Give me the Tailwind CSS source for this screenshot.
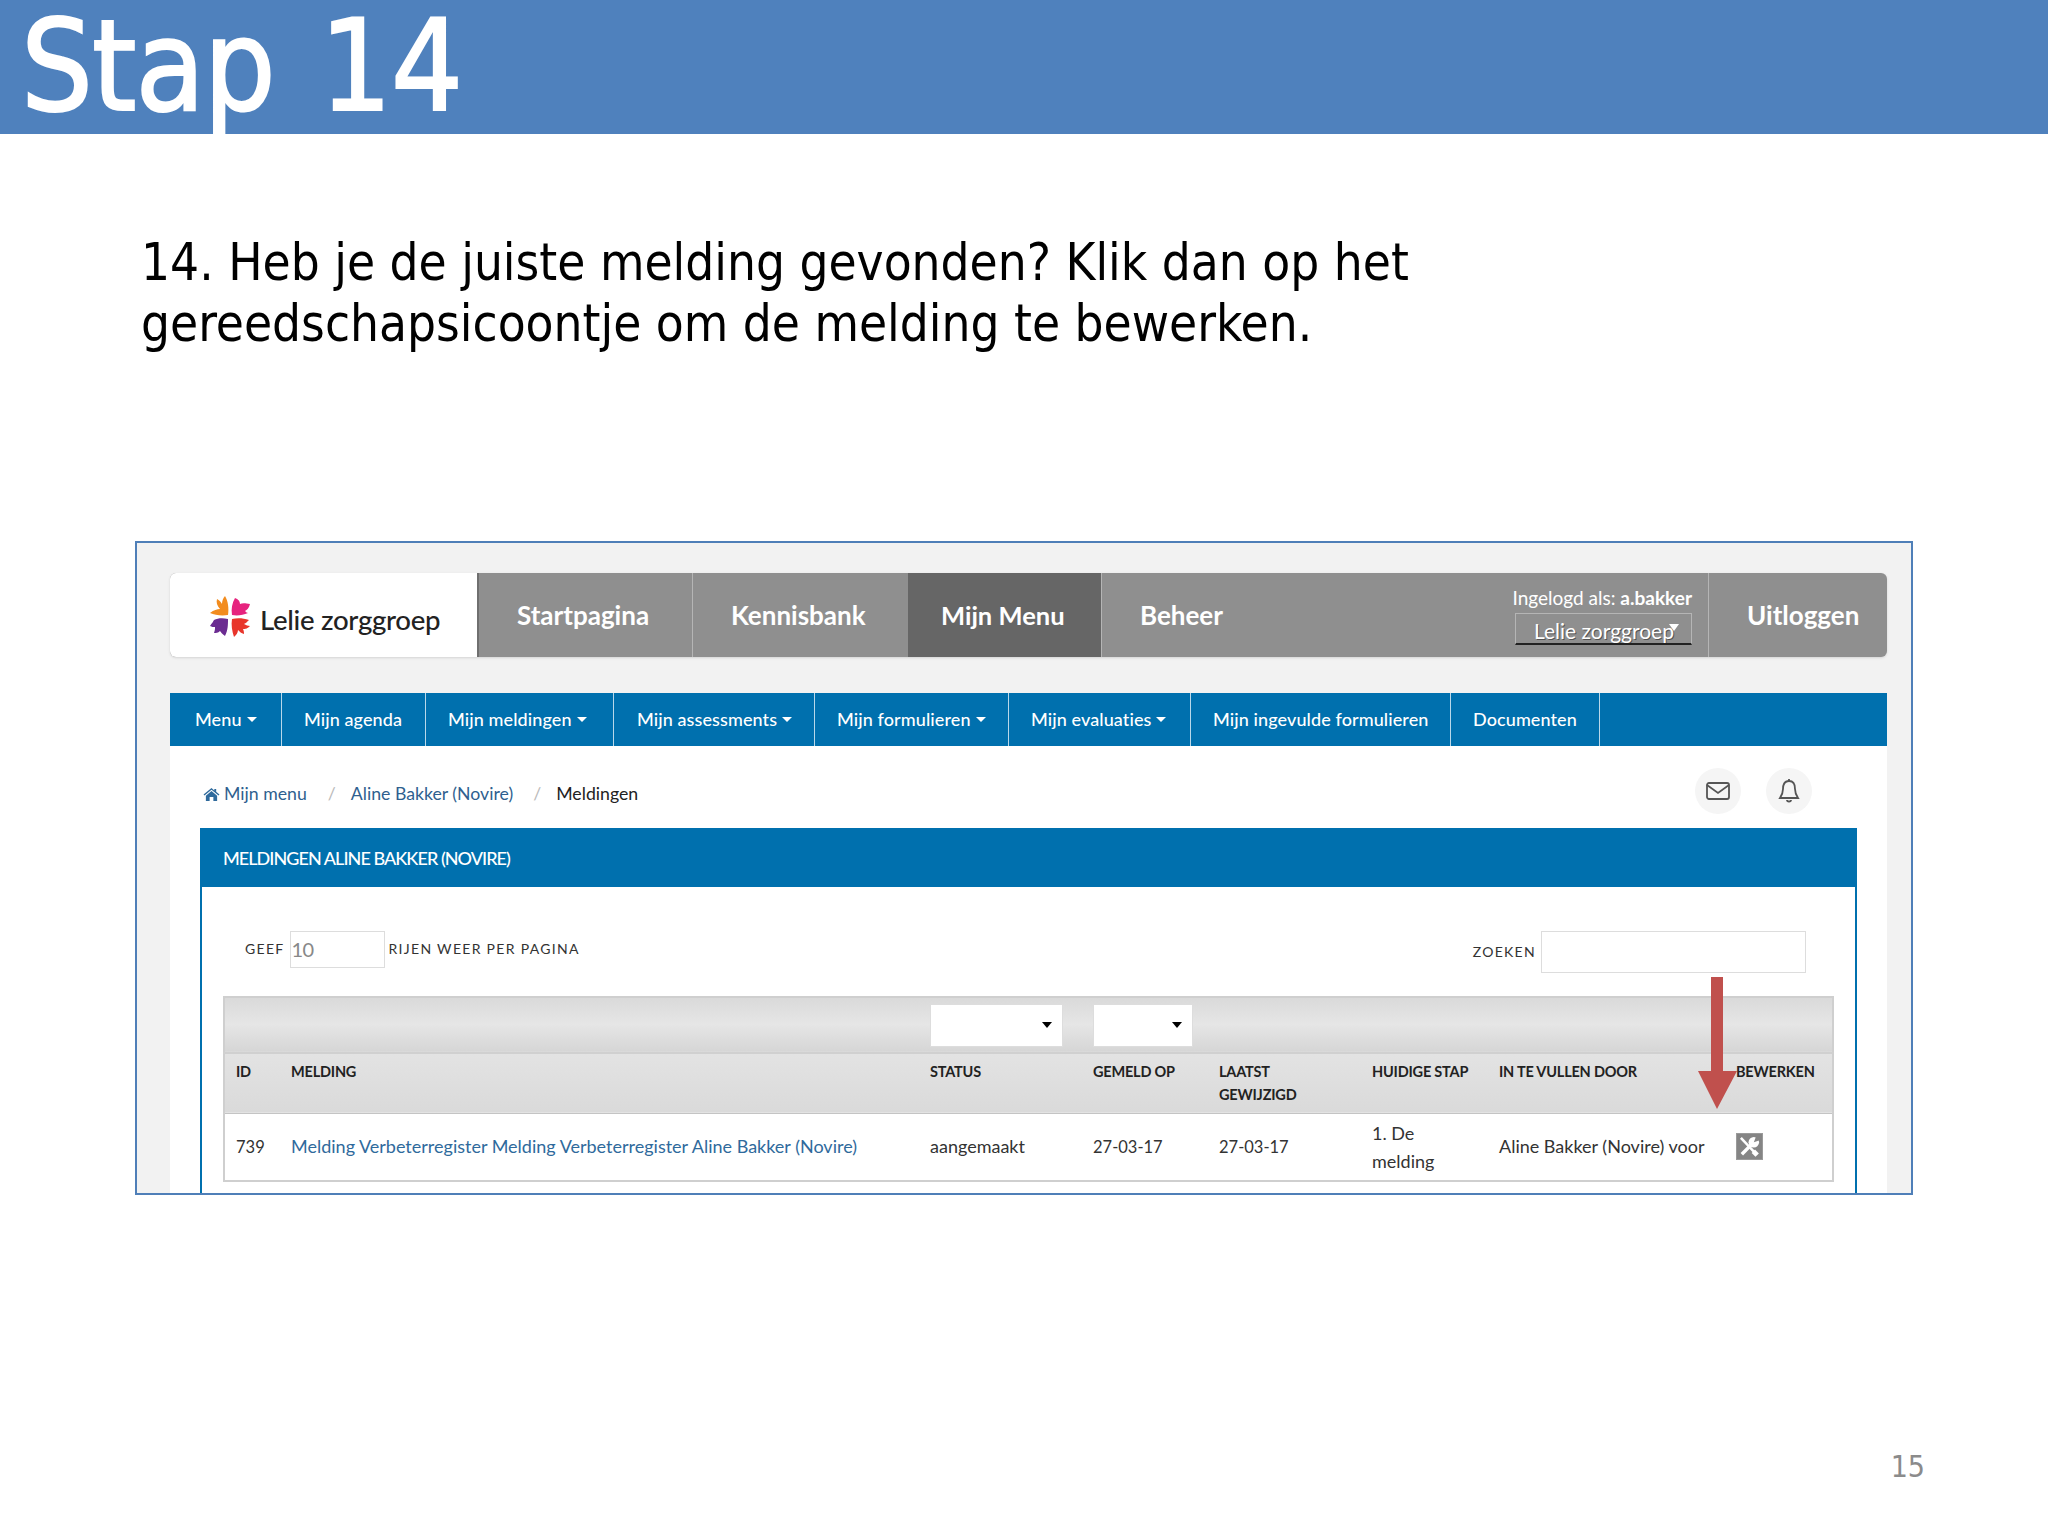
<!DOCTYPE html>
<html lang="nl">
<head>
    <meta charset="UTF-8">
    <title>Stap 14</title>
    <script src="https://cdn.jsdelivr.net/npm/@tailwindcss/browser@4"></script>
</head>
<body class="bg-white font-['DejaVu_Sans',sans-serif] font-stretch-condensed">
<div class="relative w-[2048px] h-[1536px] overflow-hidden">
    <!-- Slide title -->
    <header class="h-[134px] bg-[#4f81bd] overflow-hidden pl-[21px]">
        <h1 class="text-[126px] leading-[134px] text-white tracking-[-1px] [word-spacing:10px] [-webkit-text-stroke:2px_white]">Stap 14</h1>
    </header>

    <p class="ml-[141px] mt-[98px] text-[50.8px] leading-[61px] text-black">14. Heb je de juiste melding gevonden? Klik dan op het<br>gereedschapsicoontje om de melding te bewerken.</p>

    <!-- Screenshot of the app -->
    <section class="relative ml-[135px] mt-[187px] w-[1778px] h-[654px] border-2 border-[#4f7fb8] bg-[#f2f2f2] overflow-hidden pl-[33px] pr-[24px] pt-[30px] font-['Lato',sans-serif] font-stretch-normal">
        <!-- Top bar -->
        <div class="flex h-[84px] rounded-md shadow-sm bg-[#8f8f8f] text-white overflow-hidden">
            <div class="w-[307px] bg-white flex items-center gap-[9px] pl-[39px] text-[#222]">
                <svg class="mt-[4px]" width="42" height="42" viewBox="0 0 42 42">
                    <path fill="#f28c1e" d="M19 19 C12 20 6 19 1 17 C5 14 8 13 11 13 C8 10 7 6 8 3 C11 5 12 6 13 8 C13 5 14 2 16 0 C19 5 20 12 19 19Z"/>
                    <path fill="#e6237e" d="M23 19 C22 13 23 7 26 2 C29 3 31 5 31 8 C33 7 36 7 41 8 C40 12 38 14 36 15 C37 16 38 17 39 17 C34 19 29 20 23 19Z"/>
                    <path fill="#6b2c91" d="M19 23 C19 29 19 34 16 40 C13 38 12 36 11 35 C9 37 7 37 5 37 C6 34 6 33 6 31 C4 31 3 31 1 30 C3 27 4 26 5 24 C9 22 14 22 19 23Z"/>
                    <path fill="#e8352b" d="M23 23 C28 22 34 22 40 24 C38 26 37 27 35 28 C37 29 39 30 41 30 C38 33 36 33 34 33 C35 35 35 37 35 38 C32 37 31 36 29 34 C29 37 27 39 25 41 C23 35 22 29 23 23Z"/>
                </svg>
                <span class="text-[27.6px] leading-none mt-[9px] tracking-[-0.3px] font-medium">Lelie zorggroep</span>
            </div>
            <a class="w-[215px] border-l-2 border-[#6f6f6f] flex items-center pl-[38px] text-[26px] font-bold">Startpagina</a>
            <a class="w-[216px] border-l border-[#b5b5b5] flex items-center pl-[38px] text-[26px] font-bold">Kennisbank</a>
            <a class="w-[193px] bg-[#666666] flex items-center pl-[33px] text-[25.5px] font-bold">Mijn Menu</a>
            <a class="w-[344px] border-l border-[#b5b5b5] flex items-center pl-[38px] text-[26px] font-bold">Beheer</a>
            <div class="w-[263px] flex flex-col items-end pr-[16px] pt-[13px]">
                <div class="text-[19px] leading-[24px] whitespace-nowrap">Ingelogd als: <b>a.bakker</b></div>
                <div class="relative mt-[3px] w-[177px] h-[32px] border border-[#b5b5b5] border-b-2 border-b-[#222] text-[21px] leading-[33px] pl-[18px] whitespace-nowrap overflow-hidden [text-shadow:1px_1px_0_#555]">Lelie zorggroep<span class="absolute right-[12px] top-[10px] w-0 h-0 border-x-[5px] border-x-transparent border-t-[7px] border-t-white"></span></div>
            </div>
            <a class="flex-1 border-l border-[#b5b5b5] flex items-center pl-[38px] text-[26px] font-bold">Uitloggen</a>
        </div>

        <!-- Blue menu -->
        <nav class="flex h-[53px] mt-[36px] bg-[#0070ae] text-white text-[18px] tracking-[0.1px] font-medium">
            <a class="w-[112px] pl-[25px] border-r border-[#b9d8ea] flex items-center gap-[5px]">Menu <span class="w-0 h-0 border-x-[5px] border-x-transparent border-t-[5px] border-t-white"></span></a>
            <a class="w-[144px] pl-[22px] border-r border-[#b9d8ea] flex items-center">Mijn agenda</a>
            <a class="w-[188px] pl-[22px] border-r border-[#b9d8ea] flex items-center gap-[5px]">Mijn meldingen <span class="w-0 h-0 border-x-[5px] border-x-transparent border-t-[5px] border-t-white"></span></a>
            <a class="w-[201px] pl-[23px] border-r border-[#b9d8ea] flex items-center gap-[5px]">Mijn assessments <span class="w-0 h-0 border-x-[5px] border-x-transparent border-t-[5px] border-t-white"></span></a>
            <a class="w-[194px] pl-[22px] border-r border-[#b9d8ea] flex items-center gap-[5px]">Mijn formulieren <span class="w-0 h-0 border-x-[5px] border-x-transparent border-t-[5px] border-t-white"></span></a>
            <a class="w-[182px] pl-[22px] border-r border-[#b9d8ea] flex items-center gap-[5px]">Mijn evaluaties <span class="w-0 h-0 border-x-[5px] border-x-transparent border-t-[5px] border-t-white"></span></a>
            <a class="w-[260px] pl-[22px] border-r border-[#b9d8ea] flex items-center">Mijn ingevulde formulieren</a>
            <a class="w-[149px] pl-[22px] border-r border-[#b9d8ea] flex items-center">Documenten</a>
        </nav>

        <!-- Page body -->
        <div class="bg-white h-[500px] px-[30px]">
            <div class="flex items-center h-[82px] text-[17.7px] text-[#2f5f8f]">
                <svg class="ml-[3px] mr-[4px] mt-[14px]" width="17" height="15" viewBox="0 0 576 512"><path fill="#2f6a9c" d="M288 32 L16 256 l32 36 L288 96 l240 196 32-36 -112-92 V64 h-64 v52 z M288 136 L96 300 V480 h128 V340 h128 V480 h128 V300 z"/></svg>
                <span class="mt-[14px]">Mijn menu</span>
                <span class="ml-[21px] mr-[15px] mt-[14px] text-[#bbb]">/</span>
                <span class="mt-[14px]">Aline Bakker (Novire)</span>
                <span class="ml-[20px] mr-[15px] mt-[14px] text-[#bbb]">/</span>
                <span class="mt-[14px] text-[#222]">Meldingen</span>
                <div class="ml-auto flex gap-[25px] pr-[45px] mt-[7px]">
                    <span class="w-[46px] h-[46px] rounded-full bg-[#f5f5f5] flex items-center justify-center">
                        <svg width="26" height="24" viewBox="0 0 26 24" fill="none" stroke="#555" stroke-width="1.8"><rect x="2" y="4" width="22" height="16" rx="2"/><path d="M2 6 L13 14 L24 6"/></svg>
                    </span>
                    <span class="w-[46px] h-[46px] rounded-full bg-[#f5f5f5] flex items-center justify-center">
                        <svg width="24" height="26" viewBox="0 0 24 26" fill="none" stroke="#555" stroke-width="1.8"><path d="M12 3 C7 3 6 7 6 11 C6 15 5 17 3 20 H21 C19 17 18 15 18 11 C18 7 17 3 12 3Z"/><path d="M10 22 C10 24 14 24 14 22"/><path d="M12 1 V3"/></svg>
                    </span>
                </div>
            </div>

            <!-- Panel -->
            <div class="border-x-2 border-[#0070ae] h-[420px]">
                <div class="-mx-[2px] h-[59px] bg-[#0070ae] text-white text-[18px] font-medium flex items-center pl-[23px] pt-[2px] tracking-[-0.95px]">MELDINGEN ALINE BAKKER (NOVIRE)</div>
                <div class="flex items-start justify-between pt-[44px] pl-[43px] pr-[49px] h-[109px] text-[14px] text-[#333] tracking-[1.3px]">
                    <div class="flex items-center h-[37px]">
                        <span class="mr-[5px] -mt-[2px]">GEEF</span>
                        <span class="w-[95px] h-[37px] border border-[#ddd] text-[20px] leading-[35px] text-[#888] pl-[1px] tracking-[-0.5px]">10</span>
                        <span class="ml-[4px] -mt-[2px]">RIJEN WEER PER PAGINA</span>
                    </div>
                    <div class="flex items-center h-[42px]">
                        <span class="mr-[5px] -mt-[2px]">ZOEKEN</span>
                        <span class="w-[265px] h-[42px] border border-[#ddd]"></span>
                    </div>
                </div>

                <!-- Table -->
                <table class="table-fixed ml-[21px] w-[1611px] border-2 border-[#cfcfcf] text-[18px] text-[#333] border-collapse">
                    <colgroup>
                        <col class="w-[67px]"><col class="w-[639px]"><col class="w-[163px]"><col class="w-[126px]"><col class="w-[153px]"><col class="w-[127px]"><col class="w-[237px]"><col>
                    </colgroup>
                    <thead>
                        <tr class="h-[56px] bg-gradient-to-b from-[#d9d9d9] via-[#e6e6e6] to-[#d6d6d6] border-b-2 border-[#d0d0d0]">
                            <th colspan="2"></th>
                            <th class="px-0 text-left font-normal"><div class="w-[133px] h-[43px] bg-white border border-[#ddd] flex items-center justify-end pr-[10px]"><span class="w-0 h-0 border-x-[5px] border-x-transparent border-t-[6px] border-t-black"></span></div></th>
                            <th class="px-0 text-left font-normal"><div class="w-[100px] h-[43px] bg-white border border-[#ddd] flex items-center justify-end pr-[10px]"><span class="w-0 h-0 border-x-[5px] border-x-transparent border-t-[6px] border-t-black"></span></div></th>
                            <th colspan="4"></th>
                        </tr>
                        <tr class="h-[60px] bg-gradient-to-b from-[#e3e3e3] to-[#dadada] border-b border-[#c4c4c4] text-[14.5px] leading-[23px] font-bold text-left align-top text-[#222] tracking-[-0.2px]">
                            <th class="pl-[11px] pt-[6px] font-bold">ID</th>
                            <th class="pt-[6px] font-bold">MELDING</th>
                            <th class="pt-[6px] font-bold">STATUS</th>
                            <th class="pt-[6px] font-bold">GEMELD OP</th>
                            <th class="pt-[6px] font-bold">LAATST<br>GEWIJZIGD</th>
                            <th class="pt-[6px] font-bold">HUIDIGE STAP</th>
                            <th class="pt-[6px] font-bold">IN TE VULLEN DOOR</th>
                            <th class="pt-[6px] font-bold whitespace-nowrap">BEWERKEN</th>
                        </tr>
                    </thead>
                    <tbody class="bg-white">
                        <tr class="h-[68px]">
                            <td class="pl-[11px] pt-[2px] text-[16.5px]">739</td>
                            <td class="text-[#2f6a9c] whitespace-nowrap">Melding Verbeterregister Melding Verbeterregister Aline Bakker (Novire)</td>
                            <td>aangemaakt</td>
                            <td class="pt-[2px] text-[16.5px]">27-03-17</td>
                            <td class="pt-[2px] text-[16.5px]">27-03-17</td>
                            <td class="leading-[28px]">1. De<br>melding</td>
                            <td class="whitespace-nowrap">Aline Bakker (Novire) voor</td>
                            <td>
                                <span class="flex items-center justify-center w-[27px] h-[27px] bg-[#858585] border border-[#9a9a9a]">
                                    <svg width="23" height="23" viewBox="0 0 24 24">
                                        <path d="M3 3 L19 20" stroke="#fff" stroke-width="2.6" fill="none"/>
                                        <path d="M16 17 L20 21" stroke="#fff" stroke-width="5" fill="none"/>
                                        <path d="M4 20 L15 9" stroke="#fff" stroke-width="3.6" fill="none"/>
                                        <circle cx="16.5" cy="7.5" r="5.5" fill="#fff"/>
                                        <path d="M16.5 7.5 L19 1 L24 1 L24 5Z" fill="#858585"/>
                                    </svg>
                                </span>
                            </td>
                        </tr>
                    </tbody>
                </table>
            </div>
        </div>

        <!-- Red arrow on top of the screenshot -->
        <svg class="absolute left-[1561px] top-[434px]" width="40" height="134" viewBox="0 0 40 134"><path fill="#c0504d" d="M13 0 H25 V94 H39 L19 132 L0 94 H13Z"/></svg>
    </section>

    <div class="mt-[252px] pr-[123px] text-right text-[30px] leading-[40px] text-[#8b8b8b]">15</div>
</div>
</body>
</html>
